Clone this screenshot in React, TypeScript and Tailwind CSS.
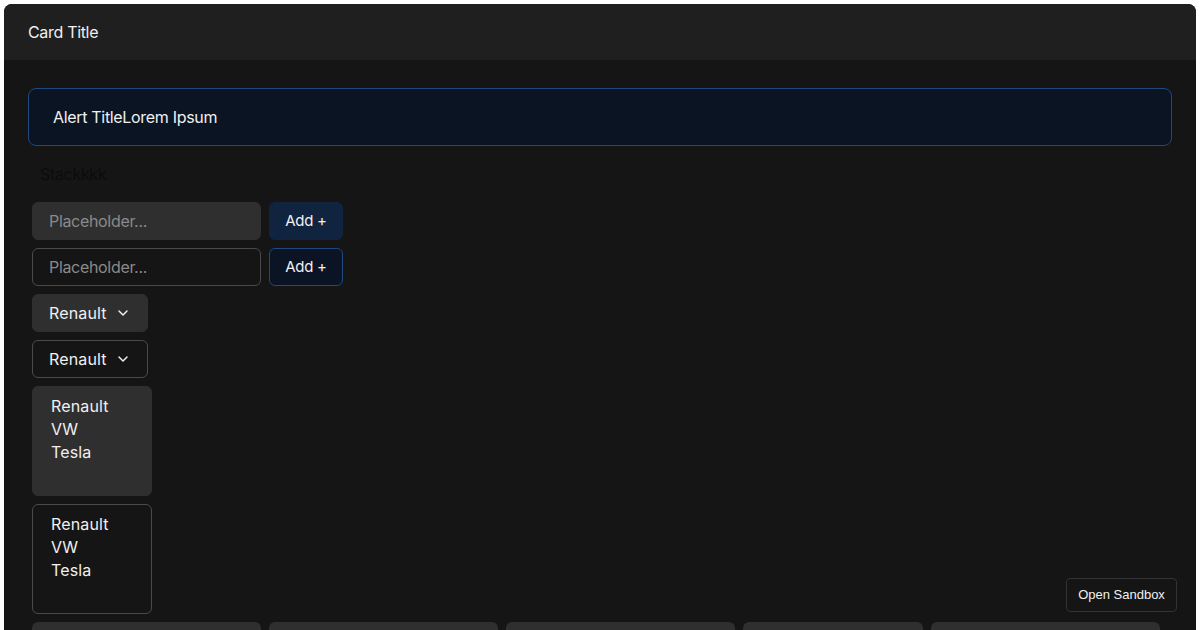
import React from "react";

const font = { fontFamily: "Inter, 'Noto Sans', sans-serif" };

function Chevron() {
  return (
    <svg width="16" height="16" viewBox="0 0 24 24" fill="none" stroke="currentColor" strokeWidth="2.2" strokeLinecap="round" strokeLinejoin="round">
      <path d="M6 9l6 6 6-6" />
    </svg>
  );
}

export default function App() {
  return (
    <div className="bg-white p-1 overflow-hidden h-[630px]" style={font}>
      <div className="rounded-t-lg overflow-hidden bg-[#151515] h-[700px]">
        <div className="h-14 bg-[#1f1f1f] px-6 flex items-center text-[16px] text-[#f0f0f0] tracking-[-0.02em]">Card Title</div>
        <div className="px-6 pt-7">
          <div className="h-[58px] rounded-lg border border-[#1e4a80] bg-[#0a1422] px-6 flex items-center text-[16px] text-[#f0f0f0] tracking-[-0.02em]">
            Alert TitleLorem Ipsum
          </div>
          <div className="mt-4 ml-1 flex flex-col gap-2 items-start">
            <p className="pl-2 h-6 leading-6 text-[16px] text-[#0c0c0c] mb-2 tracking-[-0.02em]">Stackkkk</p>
            <div className="flex gap-2">
              <div className="w-[229px] h-[38px] rounded-md bg-[#2f2f2f] border border-[#2f2f2f] px-4 flex items-center text-[16px] text-[#8a8a8a] tracking-[-0.02em]">Placeholder...</div>
              <div className="w-[74px] h-[38px] rounded-md bg-[#10243f] border border-[#10243f] flex items-center justify-center text-[15px] text-[#f0f0f0] tracking-[-0.02em]">Add +</div>
            </div>
            <div className="flex gap-2">
              <div className="w-[229px] h-[38px] rounded-md border border-[#4a4a4a] px-4 flex items-center text-[16px] text-[#8a8a8a] tracking-[-0.02em]">Placeholder...</div>
              <div className="w-[74px] h-[38px] rounded-md bg-[#0a1424] border border-[#1e4a80] flex items-center justify-center text-[15px] text-[#f0f0f0] tracking-[-0.02em]">Add +</div>
            </div>
            <div className="w-[116px] h-[38px] rounded-md bg-[#2f2f2f] border border-[#2f2f2f] px-4 flex items-center gap-[8px] text-[16px] text-[#f0f0f0] tracking-[0.01em]">
              Renault <Chevron />
            </div>
            <div className="w-[116px] h-[38px] rounded-md border border-[#4a4a4a] px-4 flex items-center gap-[8px] text-[16px] text-[#f0f0f0] tracking-[0.01em]">
              Renault <Chevron />
            </div>
            <div className="w-[120px] h-[110px] rounded-md bg-[#2f2f2f] border border-[#2f2f2f] px-[18px] pt-[8px] text-[16px] leading-[23px] text-[#f0f0f0] tracking-[0.01em]">
              <div>Renault</div>
              <div>VW</div>
              <div>Tesla</div>
            </div>
            <div className="w-[120px] h-[110px] rounded-md border border-[#4a4a4a] px-[18px] pt-[8px] text-[16px] leading-[23px] text-[#f0f0f0] tracking-[0.01em]">
              <div>Renault</div>
              <div>VW</div>
              <div>Tesla</div>
            </div>
            <div className="flex gap-2">
              <div className="w-[229px] h-[38px] rounded-md bg-[#2f2f2f]" />
              <div className="w-[229px] h-[38px] rounded-md bg-[#2f2f2f]" />
              <div className="w-[229px] h-[38px] rounded-md bg-[#2f2f2f]" />
              <div className="w-[180px] h-[38px] rounded-md bg-[#2f2f2f]" />
              <div className="w-[229px] h-[38px] rounded-md bg-[#2f2f2f]" />
            </div>
          </div>
        </div>
      </div>
      <button className="fixed right-[23px] bottom-[18px] w-[111px] h-[34px] rounded-[4px] border border-[#333] bg-[#151515] text-[13px] text-[#f0f0f0]" style={{ fontFamily: "'Liberation Sans', Arial, sans-serif" }}>
        Open Sandbox
      </button>
    </div>
  );
}
